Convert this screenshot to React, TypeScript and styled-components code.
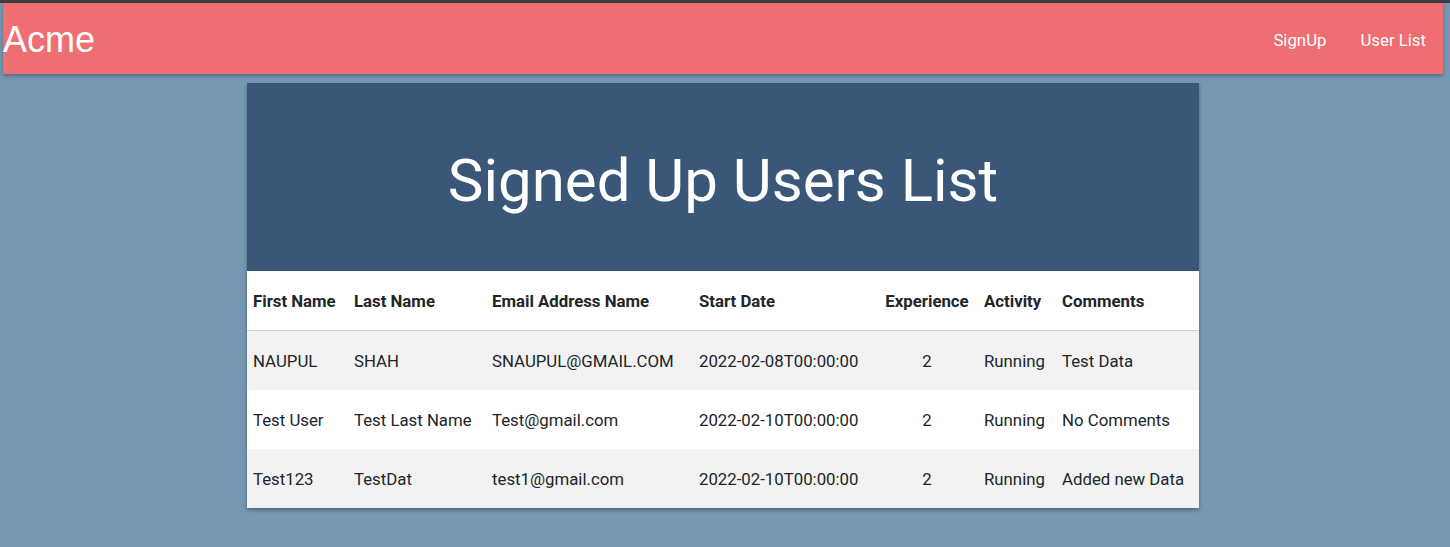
import React from 'react'
import styled, { createGlobalStyle } from 'styled-components'

const GlobalStyle = createGlobalStyle`
    html, body {
        margin: 0;
        padding: 0;
    }
    body {
        background: #7598b2;
        border-top: 3px solid #3b3d40;
        min-height: 544px;
        font-family: Roboto, 'Liberation Sans', sans-serif;
    }
`

interface User {
    firstName: string
    lastName: string
    email: string
    startDate: string
    experience: number
    activity: string
    comments: string
}

const users: User[] = [
    {
        firstName: 'NAUPUL',
        lastName: 'SHAH',
        email: 'SNAUPUL@GMAIL.COM',
        startDate: '2022-02-08T00:00:00',
        experience: 2,
        activity: 'Running',
        comments: 'Test Data',
    },
    {
        firstName: 'Test User',
        lastName: 'Test Last Name',
        email: 'Test@gmail.com',
        startDate: '2022-02-10T00:00:00',
        experience: 2,
        activity: 'Running',
        comments: 'No Comments',
    },
    {
        firstName: 'Test123',
        lastName: 'TestDat',
        email: 'test1@gmail.com',
        startDate: '2022-02-10T00:00:00',
        experience: 2,
        activity: 'Running',
        comments: 'Added new Data',
    },
]

const columns = [
    { label: 'First Name', width: 101 },
    { label: 'Last Name', width: 138 },
    { label: 'Email Address Name', width: 207 },
    { label: 'Start Date', width: 183 },
    { label: 'Experience', width: 102, center: true },
    { label: 'Activity', width: 78 },
    { label: 'Comments', width: 143 },
]

export default function App() {
    return (
        <>
            <GlobalStyle />
            <Page>
                <NavBar>
                    <Brand>Acme</Brand>
                    <NavLinks>
                        <NavLink href="#">SignUp</NavLink>
                        <NavLink href="#">User List</NavLink>
                    </NavLinks>
                </NavBar>
                <Card>
                    <CardHeader>
                        <Title>Signed Up Users List</Title>
                    </CardHeader>
                    <Table>
                        <colgroup>
                            {columns.map((col) => (
                                <col key={col.label} style={{ width: col.width }} />
                            ))}
                        </colgroup>
                        <thead>
                            <tr>
                                {columns.map((col) => (
                                    <HeadCell key={col.label} $center={col.center}>
                                        {col.label}
                                    </HeadCell>
                                ))}
                            </tr>
                        </thead>
                        <tbody>
                            {users.map((user, i) => (
                                <Row key={user.email} $striped={i % 2 === 0}>
                                    <Cell>{user.firstName}</Cell>
                                    <Cell>{user.lastName}</Cell>
                                    <Cell>{user.email}</Cell>
                                    <Cell>{user.startDate}</Cell>
                                    <Cell $center>{user.experience}</Cell>
                                    <Cell>{user.activity}</Cell>
                                    <Cell>{user.comments}</Cell>
                                </Row>
                            ))}
                        </tbody>
                    </Table>
                </Card>
            </Page>
        </>
    )
}

const Page = styled.div`
    display: flex;
    flex-direction: column;
    align-items: center;
    padding: 0 3px;
`

const NavBar = styled.header`
    align-self: stretch;
    height: 71px;
    background: #ef6e72;
    display: flex;
    align-items: center;
    justify-content: space-between;
    box-shadow: 0 2px 4px rgba(0, 0, 0, 0.3);
    margin-right: 4px;
`

const Brand = styled.div`
    font-family: 'Liberation Sans', Arial, sans-serif;
    font-size: 36px;
    color: #fff;
    margin-top: 2px;
`

const NavLinks = styled.nav`
    display: flex;
    gap: 34px;
    padding-right: 17px;
    margin-top: 3px;
`

const NavLink = styled.a`
    color: #fff;
    text-decoration: none;
    font-size: 16.8px;
    font-family: Roboto, sans-serif;
`

const Card = styled.section`
    width: 952px;
    margin-top: 9px;
    margin-right: 4px;
    background: #fff;
    box-shadow: 0 2px 4px rgba(0, 0, 0, 0.35);
`

const CardHeader = styled.div`
    height: 188px;
    background: #3a5679;
    display: flex;
    align-items: center;
    justify-content: center;
`

const Title = styled.h1`
    margin: 6px 0 0;
    font-family: Roboto, sans-serif;
    font-weight: 400;
    font-size: 60px;
    color: #fff;
`

const Table = styled.table`
    width: 100%;
    table-layout: fixed;
    border-collapse: collapse;
    font-family: Roboto, sans-serif;
    font-size: 16.8px;
    color: #212529;
`

const HeadCell = styled.th<{ $center?: boolean }>`
    height: 59px;
    padding: 0 6px;
    text-align: ${(p) => (p.$center ? 'center' : 'left')};
    font-weight: 700;
    white-space: nowrap;
    border-bottom: 1px solid #d4d4d4;
`

const Row = styled.tr<{ $striped: boolean }>`
    background: ${(p) => (p.$striped ? '#f2f2f2' : '#fff')};
`

const Cell = styled.td<{ $center?: boolean }>`
    height: 59px;
    padding: 0 6px;
    text-align: ${(p) => (p.$center ? 'center' : 'left')};
    white-space: nowrap;
`
